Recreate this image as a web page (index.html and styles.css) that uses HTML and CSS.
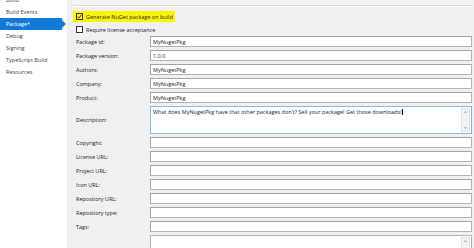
FILE: index.html
```html
<!DOCTYPE html>
<html lang="en">
<head>
  <meta charset="UTF-8">
  <title>Package</title>
  <link rel="stylesheet" href="styles.css">
</head>
<body>
  <nav class="menu">
    <div class="item corte">Build</div>
    <div class="item">Build Events</div>
    <div class="item activo">Package*</div>
    <div class="item">Debug</div>
    <div class="item">Signing</div>
    <div class="item">TypeScript Build</div>
    <div class="item">Resources</div>
  </nav>

  <main class="panel">
    <div class="tope"></div>

    <div class="opciones">
      <label class="check resaltado">
        <span class="caja"><svg viewBox="0 0 7 7" width="7" height="7"><path d="M1.3 3.6 L2.8 5.1 L5.7 1.6" fill="none" stroke="#222" stroke-width="0.9"/></svg></span>
        Generate NuGet package on build
      </label>
      <label class="check">
        <span class="caja"></span>
        Require license acceptance
      </label>
    </div>

    <div class="campos">
      <div class="fila"><span class="etiqueta">Package id:</span><input class="texto" value="MyNugetPkg"></div>
      <div class="fila"><span class="etiqueta">Package version:</span><input class="texto" value="1.0.0"></div>
      <div class="fila"><span class="etiqueta">Authors:</span><input class="texto" value="MyNugetPkg"></div>
      <div class="fila"><span class="etiqueta">Company:</span><input class="texto" value="MyNugetPkg"></div>
      <div class="fila"><span class="etiqueta">Product:</span><input class="texto" value="MyNugetPkg"></div>

      <div class="fila alta">
        <span class="etiqueta">Description:</span>
        <div class="area foco">
          <div class="contenido">What does MyNugetPkg have that other packages don't? Sell your package! Get those downloads!<span class="cursor"></span></div>
          <div class="barra">
            <svg viewBox="0 0 5 4" width="5" height="4"><path d="M1 3 L2.5 1.5 L4 3" fill="none" stroke="#9a9a9a" stroke-width="0.8"/></svg>
            <svg viewBox="0 0 5 4" width="5" height="4"><path d="M1 1 L2.5 2.5 L4 1" fill="none" stroke="#9a9a9a" stroke-width="0.8"/></svg>
          </div>
        </div>
      </div>

      <div class="fila"><span class="etiqueta">Copyright:</span><input class="texto"></div>
      <div class="fila"><span class="etiqueta">License URL:</span><input class="texto"></div>
      <div class="fila"><span class="etiqueta">Project URL:</span><input class="texto"></div>
      <div class="fila"><span class="etiqueta">Icon URL:</span><input class="texto"></div>
      <div class="fila"><span class="etiqueta">Repository URL:</span><input class="texto"></div>
      <div class="fila"><span class="etiqueta">Repository type:</span><input class="texto"></div>
      <div class="fila"><span class="etiqueta">Tags:</span><input class="texto"></div>

      <div class="fila notas">
        <span class="etiqueta"></span>
        <div class="area">
          <div class="contenido"></div>
          <div class="barra">
            <svg viewBox="0 0 5 4" width="5" height="4"><path d="M1 3 L2.5 1.5 L4 3" fill="none" stroke="#9a9a9a" stroke-width="0.8"/></svg>
          </div>
        </div>
      </div>
    </div>
  </main>
</body>
</html>
```

FILE: styles.css
```css
html, body {
  margin: 0;
  height: 248px;
  overflow: hidden;
}

body {
  display: flex;
  font-family: 'Open Sans', 'Noto Sans', sans-serif;
  font-size: 5.5px;
  color: #1e1e1e;
  background: #f0f0f0;
}

/* Menu lateral */
.menu {
  width: 67px;
  flex: none;
  background: #ffffff;
}

.item {
  height: 12px;
  line-height: 12px;
  padding-left: 6px;
  color: #444444;
  white-space: nowrap;
  width: 62px;
  box-sizing: border-box;
  position: relative;
}

.corte {
  margin-top: -6px;
}

.activo {
  background: #0f7ad8;
  color: #ffffff;
}

.activo::after {
  content: "";
  position: absolute;
  left: 62px;
  top: 2px;
  border-left: 4px solid #0f7ad8;
  border-top: 4px solid transparent;
  border-bottom: 4px solid transparent;
}

/* Panel principal */
.panel {
  flex: 1;
  padding: 0 2px 0 9px;
  background: #f0f0f0;
}

.tope {
  height: 5px;
  margin-left: -3px;
  background: #f4f4f4;
  border-bottom: 1px solid #dcdcdc;
  box-shadow: 0 1px 0 #ffffff;
}

.opciones {
  display: flex;
  flex-direction: column;
  gap: 2px;
  margin-top: 5px;
}

.check {
  display: flex;
  align-items: center;
  gap: 3px;
  height: 11px;
  align-self: flex-start;
}

.resaltado {
  background: #f7f700;
  margin-left: -3px;
  padding: 0 2px 0 3px;
}

.caja {
  width: 7px;
  height: 7px;
  box-sizing: border-box;
  border: 1px solid #333333;
  background: #ffffff;
  display: flex;
}

.caja svg {
  margin: -1px;
}

.resaltado .caja {
  background: transparent;
}

.campos {
  display: flex;
  flex-direction: column;
  gap: 3px;
  margin-top: 1px;
}

.fila {
  display: flex;
  align-items: center;
  height: 11px;
}

.etiqueta {
  width: 74px;
  flex: none;
  white-space: nowrap;
}

.texto {
  flex: 1;
  height: 11px;
  box-sizing: border-box;
  margin: 0;
  padding: 0 2px;
  border: 1px solid #b4b4b4;
  border-top-color: #a4a4a4;
  border-left-color: #a8a8a8;
  background: #ffffff;
  font-family: inherit;
  font-size: 5.5px;
  color: #1e1e1e;
  outline: none;
}

.alta {
  height: 28px;
}

.notas {
  height: 40px;
  align-items: flex-start;
}

.area {
  flex: 1;
  height: 100%;
  box-sizing: border-box;
  display: flex;
  border: 1px solid #b4b4b4;
  background: #ffffff;
}

.foco {
  border-color: #86b8e8;
}

.contenido {
  flex: 1;
  padding: 1px 2px;
  line-height: 8px;
}

.cursor {
  display: inline-block;
  width: 1px;
  height: 6px;
  background: #000000;
  vertical-align: -1px;
}

.barra {
  width: 7px;
  margin: 1px 1px 1px 0;
  background: #f3f3f3;
  border: 1px solid #e2e2e2;
  display: flex;
  flex-direction: column;
  justify-content: space-between;
  align-items: center;
  padding: 1px 0;
}
```
